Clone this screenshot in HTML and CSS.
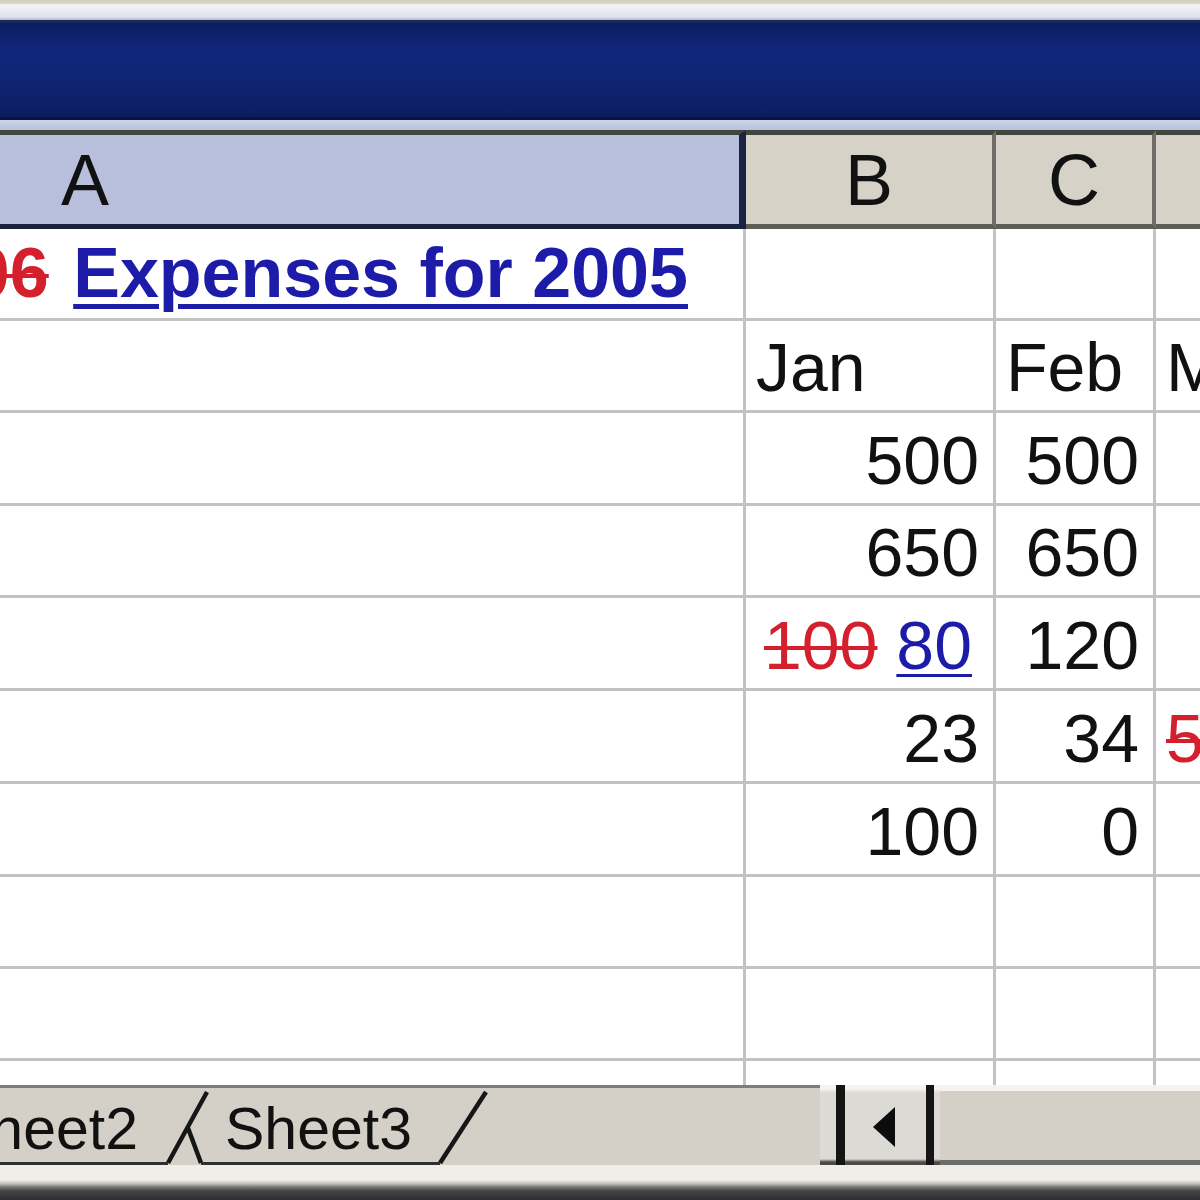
FILE: index.html
```html
<!DOCTYPE html>
<html>

<head>
	<title>Book1 - Expenses</title>
	<link rel="stylesheet" href="styles.css">
</head>

<body>
	<div class="frame-top"></div>
	<div class="caption"></div>
	<div class="caption-edge"></div>

	<div class="sheet">
		<div class="col-head selected">A</div>
		<div class="col-head">B</div>
		<div class="col-head">C</div>
		<div class="col-head">D</div>

		<div class="cell title"><span class="lead"><span class="del">2006</span> <span class="ins">Expenses for 2005</span></span></div>
		<div class="cell"></div>
		<div class="cell"></div>
		<div class="cell"></div>

		<div class="cell"></div>
		<div class="cell">Jan</div>
		<div class="cell">Feb</div>
		<div class="cell">Mar</div>

		<div class="cell"></div>
		<div class="cell num">500</div>
		<div class="cell num">500</div>
		<div class="cell"></div>

		<div class="cell"></div>
		<div class="cell num">650</div>
		<div class="cell num">650</div>
		<div class="cell"></div>

		<div class="cell"></div>
		<div class="cell num"><span class="edit"><span class="del">100</span> <span class="ins">80</span></span></div>
		<div class="cell num">120</div>
		<div class="cell"></div>

		<div class="cell"></div>
		<div class="cell num">23</div>
		<div class="cell num">34</div>
		<div class="cell"><span class="del">56</span></div>

		<div class="cell"></div>
		<div class="cell num">100</div>
		<div class="cell num">0</div>
		<div class="cell"></div>

		<div class="cell"></div>
		<div class="cell"></div>
		<div class="cell"></div>
		<div class="cell"></div>

		<div class="cell"></div>
		<div class="cell"></div>
		<div class="cell"></div>
		<div class="cell"></div>

		<div class="cell cut"></div>
		<div class="cell cut"></div>
		<div class="cell cut"></div>
		<div class="cell cut"></div>
	</div>

	<div class="tabbar">
		<div class="tabs">
			<span class="tab first">Sheet2</span>
			<svg class="tab-edge" width="52" height="77" viewBox="0 0 52 77">
				<path d="M47 4 L8 75 M28 40 L41 75" />
				<path class="tab-base" d="M0 75.5 H8 M41 75.5 H52" />
			</svg>
			<span class="tab">Sheet3</span>
			<svg class="tab-edge" width="54" height="77" viewBox="0 0 54 77">
				<path d="M50 4 L4 75" />
				<path class="tab-base" d="M0 75.5 H4" />
			</svg>
		</div>
		<div class="split">
			<span class="split-bar"></span>
			<svg class="arrow" width="22" height="40" viewBox="0 0 22 40">
				<path d="M22 0 L0 20 L22 40 Z" />
			</svg>
			<span class="split-bar narrow"></span>
		</div>
		<div class="hscroll"></div>
	</div>
	<div class="status"></div>
</body>

</html>
```

FILE: styles.css
```css
* {
	box-sizing: border-box;
}

body {
	margin: 0;
	width: 1200px;
	height: 1200px;
	overflow: hidden;
	background: white;
	font-family: "Liberation Sans", Arial, sans-serif;
	color: #111;
}

/* window chrome above the grid */
.frame-top {
	height: 20px;
	background: linear-gradient(#d5d1bf 0, #d5d1bf 3px, #f2f3f8 5px, #dfe3ef 17px, #aeb5cc 20px);
}

.caption {
	height: 100px;
	border-top: 3px solid #1d2a58;
	border-bottom: 3px solid #0b143c;
	background: linear-gradient(#0b1d62, #10267a 30%, #0e2370 70%, #0b1c60);
}

.caption-edge {
	height: 10px;
	background: linear-gradient(#cdd4ea, #b9c1dc);
}

/* the grid */
.sheet {
	display: grid;
	grid-template-columns: 746px 250px 160px 200px;
	grid-template-rows: 99px 92px 92px 93px 92px 93px 93px 93px 92px 92px 24px;
}

.col-head {
	display: flex;
	align-items: center;
	justify-content: center;
	border-top: 5px solid #41473f;
	border-bottom: 5px solid #5e5d58;
	border-right: 4px solid #6e6d68;
	background: #d6d2c8;
	font-size: 72px;
	line-height: 1;
}

.col-head.selected {
	justify-content: flex-start;
	padding-left: 61px;
	background: #b7bfdc;
	border-bottom-color: #1b2141;
	border-right: 7px solid #1c2242;
}

.cell {
	display: flex;
	align-items: flex-end;
	padding: 0 14px 9px 10px;
	border-right: 3px solid #c2c2c2;
	border-bottom: 3px solid #c2c2c2;
	font-size: 68px;
	line-height: 1;
	white-space: nowrap;
}

.cell.num {
	justify-content: flex-end;
}

.cell.cut {
	border-bottom: 0;
}

.cell.title {
	font-size: 70px;
	font-weight: bold;
	padding-bottom: 10px;
}

.lead {
	margin-left: -117px;
}

.title .ins {
	margin-left: 5px;
}

.edit {
	margin-right: 7px;
}

/* tracked changes */
.del {
	color: #d3202c;
	text-decoration: line-through;
	text-decoration-thickness: 4px;
}

.ins {
	color: #1c1ca8;
	text-decoration: underline;
	text-decoration-thickness: 3px;
	text-underline-offset: 5px;
}

.title .ins {
	text-decoration-thickness: 5px;
	text-underline-offset: 7px;
}

/* sheet tabs and scroll bar */
.tabbar {
	display: flex;
	height: 80px;
}

.tabs {
	display: flex;
	width: 820px;
	border-top: 3px solid #7d7c78;
	background: #d4d0c8;
}

.tab {
	height: 77px;
	padding-top: 12px;
	border-bottom: 3px solid #2f2f2f;
	font-size: 59px;
	line-height: 59px;
	color: #111;
	padding-left: 13px;
	padding-right: 24px;
}

.tab.first {
	margin-left: -49px;
	padding-left: 0;
	padding-right: 22px;
}

.tab-edge {
	flex: none;
}

.tab-edge path {
	fill: none;
	stroke: #161616;
	stroke-width: 4.5;
}

.tab-edge .tab-base {
	stroke: #2f2f2f;
	stroke-width: 3;
}

.split {
	display: flex;
	align-items: center;
	width: 120px;
	padding-left: 16px;
	background: linear-gradient(#f4f3ef 0, #f4f3ef 4px, #dcdad4 8px, #dcdad4 74px, #4c4b48 77px);
}

.split-bar {
	align-self: stretch;
	width: 9px;
	background: #141414;
}

.split-bar.narrow {
	width: 8px;
}

.arrow {
	margin: 4px 31px 0 28px;
}

.arrow path {
	fill: #0c0c0c;
}

.hscroll {
	flex: 1;
	border-top: 6px solid #f4f3ef;
	border-bottom: 5px solid #6d6c68;
	background: #d4d0c8;
}

.status {
	height: 35px;
	background: linear-gradient(#efeee9 0, #efeee9 15px, #bdbbb5 19px, #7a7976 22px, #444 26px, #2e2e2e 35px);
}
```
